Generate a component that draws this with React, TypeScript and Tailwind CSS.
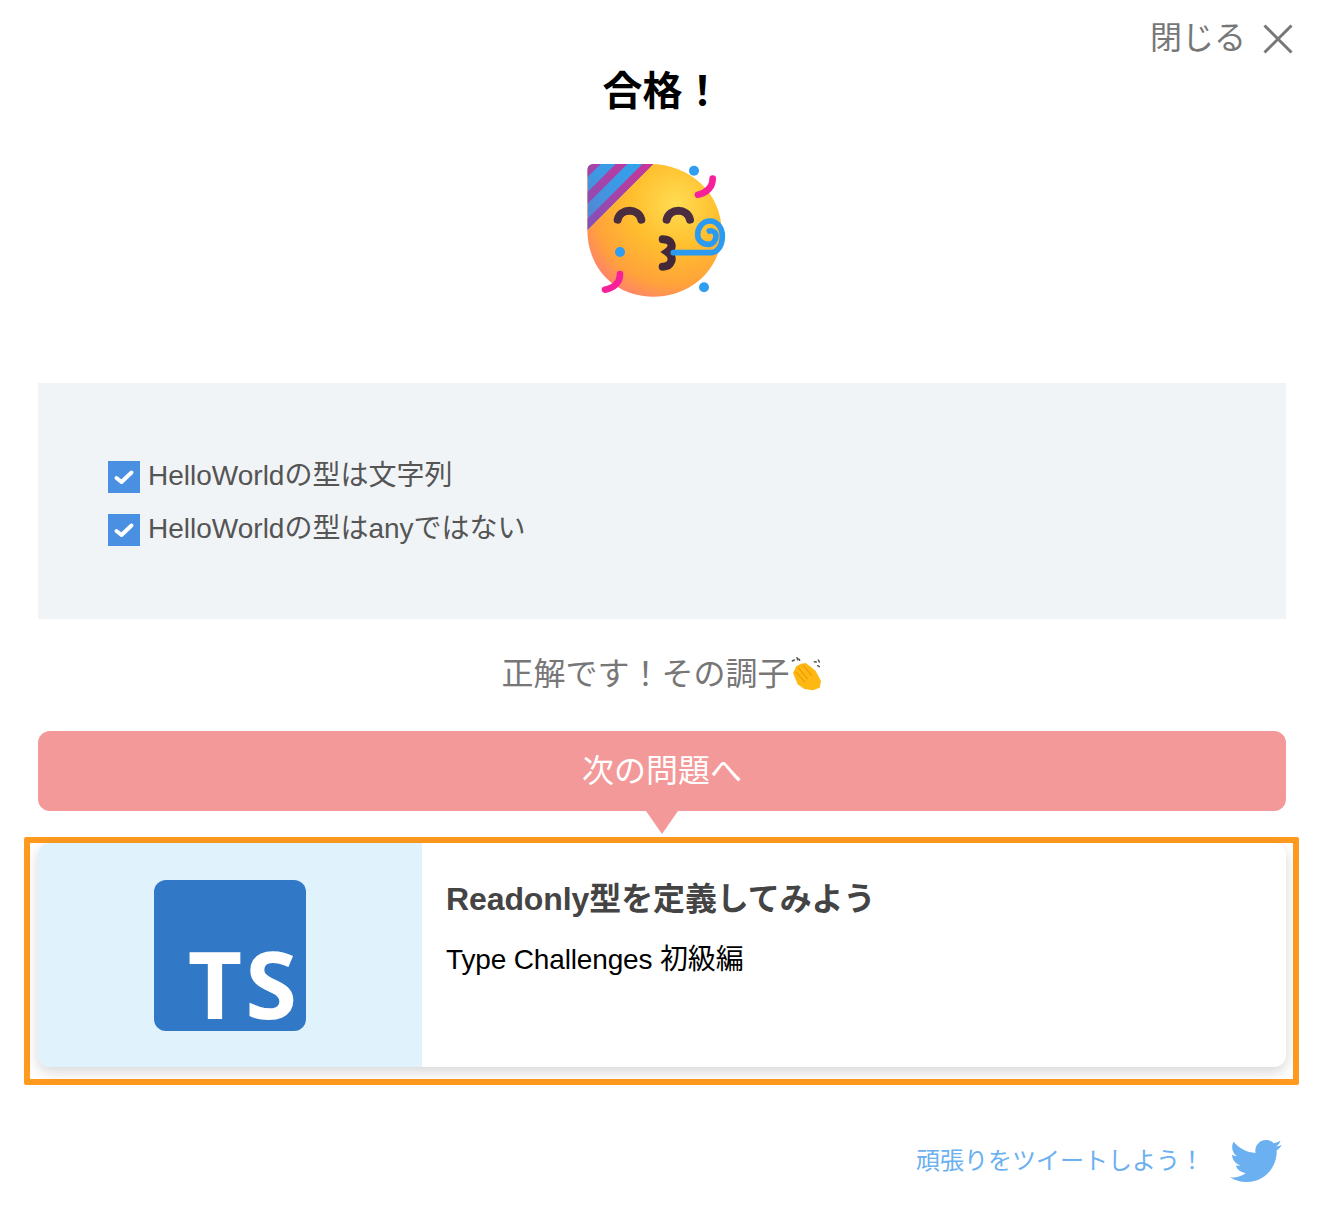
import React from "react";
import { FaTwitter } from "react-icons/fa";

const font = "font-['Liberation_Sans','Noto_Sans_CJK_JP',sans-serif]";

function PartyFace() {
  return (
    <svg width="170" height="160" viewBox="0 0 510 480" className="block">
      <defs>
        <radialGradient id="face" cx="0.66" cy="0.3" r="0.82">
          <stop offset="0" stopColor="#ffdc52" />
          <stop offset="0.4" stopColor="#ffbf2e" />
          <stop offset="0.75" stopColor="#ffa23a" />
          <stop offset="0.93" stopColor="#ff8468" />
          <stop offset="1" stopColor="#ff5fa0" />
        </radialGradient>
        <linearGradient id="stripeA" x1="0" y1="0.9" x2="1" y2="0">
          <stop offset="0" stopColor="#8450b8" />
          <stop offset="1" stopColor="#cc3496" />
        </linearGradient>
        <linearGradient id="stripeB" x1="0" y1="1" x2="1" y2="0">
          <stop offset="0" stopColor="#5a80cc" />
          <stop offset="0.5" stopColor="#3f98e4" />
          <stop offset="1" stopColor="#2fa4ee" />
        </linearGradient>
        <clipPath id="hat">
          <path d="M72 42H250L52 240V62Q52 42 72 42Z" />
        </clipPath>
      </defs>
      <path d="M72 42H240C360 42 455 130 455 245C455 360 360 440 250 440C130 440 52 350 52 240V62Q52 42 72 42Z" fill="url(#face)" />
      <g clipPath="url(#hat)">
        <rect x="52" y="42" width="200" height="200" fill="url(#stripeB)" />
        <path d="M52 42H92L52 82Z M137 42H172L52 162V127Z M217 42H252L52 242V207Z" fill="url(#stripeA)" />
      </g>
      <g fill="none" strokeLinecap="round">
        <path d="M143 209C151 173 206 173 214 209" stroke="#4a2e3f" strokeWidth="24" />
        <path d="M290 209C298 173 352 173 360 209" stroke="#4a2e3f" strokeWidth="24" />
        <path d="M278 268C305 268 315 290 292 306C315 322 305 350 278 350" stroke="#43283a" strokeWidth="24" />
        <path d="M310 308H420C445 308 457 285 457 258C457 232 440 213 420 213C398 213 383 232 383 255C383 272 398 283 415 283C430 283 438 270 438 258C438 247 428 240 418 243" stroke="#2a9bf0" strokeWidth="17" />
        <path d="M384 134C408 130 428 112 428 86" stroke="#f5209a" strokeWidth="20" />
        <path d="M105 419C132 414 150 398 150 372" stroke="#f5209a" strokeWidth="20" />
      </g>
      <circle cx="372" cy="62" r="15" fill="#2f9df0" />
      <circle cx="150" cy="306" r="15" fill="#2f9df0" />
      <circle cx="402" cy="412" r="15" fill="#2f9df0" />
    </svg>
  );
}

function Clap() {
  return (
    <svg width="34" height="36" viewBox="15 15 102 108" className="block">
      <path d="M24 66L34 46L48 38L62 36L78 48L92 60L108 90L104 110L84 118L58 114L38 100Z" fill="#fdb813" />
      <path d="M40 50L68 84M32 62L60 94M54 42L80 74" stroke="#e88f00" strokeWidth="3" fill="none" />
      <path d="M22 30L28 27M36 20L38 26M44 28L42 24M88 32L94 33M100 27L103 33M98 44L103 47" stroke="#555" strokeWidth="4.5" strokeLinecap="round" />
    </svg>
  );
}

function CheckRow({ text }: { text: string }) {
  return (
    <div className="flex h-[53px] items-start">
      <span className="mt-[5px] flex h-[32px] w-[32px] items-center justify-center bg-[#4a90e2]">
        <svg width="22" height="18" viewBox="0 0 22 18" fill="none">
          <path d="M3.5 10L8.5 14L18.5 4.5" stroke="#fff" strokeWidth="4" strokeLinecap="round" strokeLinejoin="round" />
        </svg>
      </span>
      <span className="ml-[8px] mt-[1px] text-[28px] leading-[38px] text-[#555]">{text}</span>
    </div>
  );
}

export default function App() {
  return (
    <div className={`${font} h-[1228px] w-[1320px] overflow-hidden bg-white`}>
      <div className="flex h-[34px] items-start justify-end pr-[26px] pt-[18px]">
        <span className="text-[32px] leading-[40px] text-[#777]">閉じる</span>
        <svg width="32" height="32" viewBox="0 0 32 32" className="ml-[16px] mt-[5px] text-[#777]">
          <path d="M2.5 2.5L29.5 29.5M29.5 2.5L2.5 29.5" stroke="currentColor" strokeWidth="3" fill="none" />
        </svg>
      </div>
      <h1 className="mt-[32px] pl-[5px] text-center text-[40px] leading-[50px] font-bold text-black">合格！</h1>
      <div className="mt-[34px] flex justify-center pr-[10px]">
        <PartyFace />
      </div>
      <div className="ml-[38px] mr-[34px] mt-[73px] h-[236px] bg-[#f0f4f7] px-[70px] pt-[73px]">
        <CheckRow text="HelloWorldの型は文字列" />
        <CheckRow text="HelloWorldの型はanyではない" />
      </div>
      <div className="mt-[35px] flex h-[40px] items-center justify-center pl-[5px] text-[32px] leading-[40px] text-[#777]">
        正解です！その調子
        <Clap />
      </div>
      <div className="relative ml-[38px] mr-[34px] mt-[37px] flex h-[80px] items-center justify-center rounded-[12px] bg-[#f39999] text-[32px] text-white">
        次の問題へ
        <span className="absolute left-[608px] top-[80px] h-0 w-0 border-x-[16.5px] border-t-[23px] border-x-transparent border-t-[#f39999]" />
      </div>
      <div className="ml-[24px] mt-[26px] h-[248px] w-[1275px] rounded-[2px] border-[6px] border-[#ff9a1f] pl-[8px] pr-[6px]">
        <div className="flex h-[224px] w-[1248px] overflow-hidden rounded-[12px] bg-white shadow-[0_5px_14px_rgba(0,0,0,0.16)]">
          <div className="flex w-[384px] items-center justify-center bg-[#e0f3fd]">
            <div className="flex h-[151px] w-[152px] items-end justify-end rounded-[12px] bg-[#3178c6] pb-[1px] pr-[6px]">
              <span className="font-['Open_Sans',sans-serif] text-[94px] leading-[94px] font-bold tracking-[3px] text-white">TS</span>
            </div>
          </div>
          <div className="pl-[24px] pt-[34px]">
            <div className="text-[32px] leading-[44px] font-bold tracking-[-0.1px] text-[#444]">Readonly型を定義してみよう</div>
            <div className="mt-[19px] text-[28px] leading-[40px] tracking-[-0.15px] text-black">Type Challenges 初級編</div>
          </div>
        </div>
      </div>
      <div className="mt-[50px] flex items-center justify-end pr-[38px]">
        <span className="text-[24px] leading-[34px] text-[#6bb0f0]">頑張りをツイートしよう！</span>
        <FaTwitter className="ml-[26px] text-[52px] text-[#6bb0f0]" />
      </div>
    </div>
  );
}
